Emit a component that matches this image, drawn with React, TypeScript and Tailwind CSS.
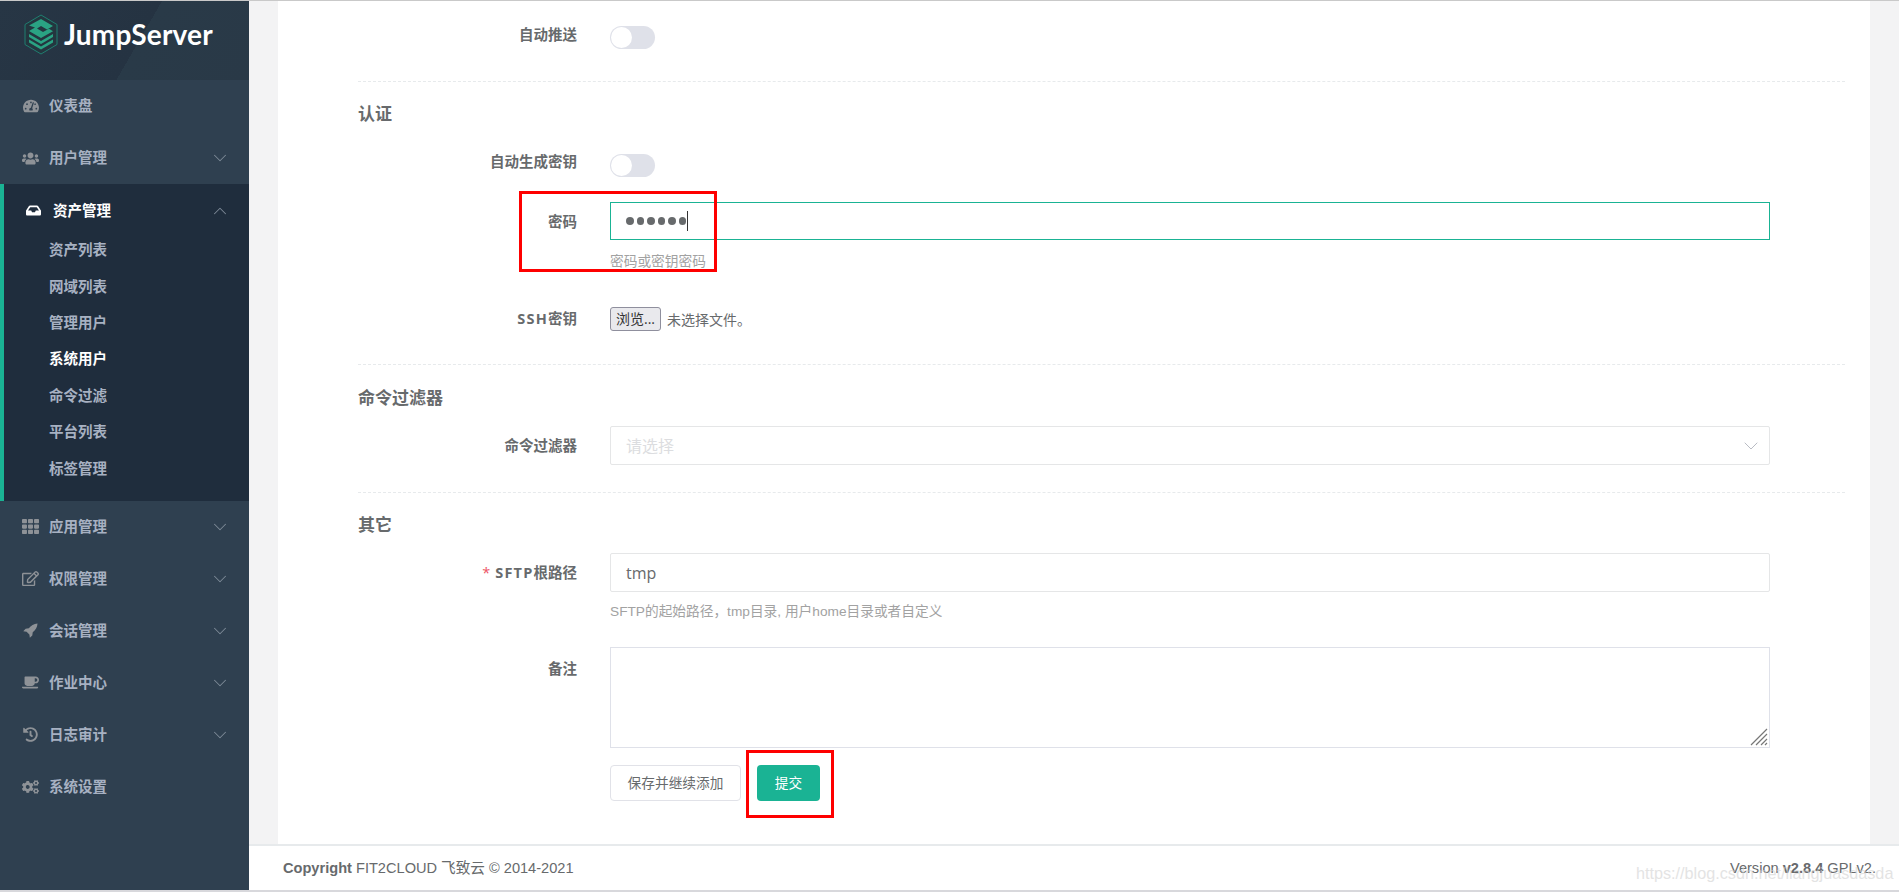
import React from 'react';
import { ChevronDown, ChevronUp } from 'lucide-react';
import { FaTachometerAlt, FaUsers, FaInbox, FaTh, FaRegEdit, FaCoffee, FaHistory, FaCogs } from 'react-icons/fa';

const navFont = "font-['Open_Sans','Noto_Sans_CJK_SC',sans-serif]";

function Logo() {
  return (
    <svg width="34" height="41" viewBox="0 0 34 41" className="shrink-0">
      <path d="M17 1 L33 10.5 V30.5 L17 40 L1 30.5 V10.5 Z" fill="#24363f" stroke="#1f7f70" strokeWidth="1" />
      <path d="M17 5 L29 12 L23 15.5 L17 12 L13 14.5 L19 18 L25 14.8 L29 17.2 L17 24 L5 17 L11 13.5 L5 11.5 Z" fill="#2aa383" />
      <path d="M5 20 L17 27 L29 20 V23 L17 30 L5 23 Z" fill="#2aa383" />
      <path d="M5 25.5 L17 32.5 L29 25.5 V28.5 L17 35.5 L5 28.5 Z" fill="#2aa383" />
    </svg>
  );
}

function Rocket() {
  return (
    <svg viewBox="0 0 16 16" width="15" height="15" fill="currentColor">
      <path d="M15.5 0.5 C11.5 0.8 8.5 2.6 6.2 5.6 L2.8 6.1 L0.3 8.7 L3.8 9.2 L6.8 12.2 L7.3 15.7 L9.9 13.2 L10.4 9.8 C13.4 7.5 15.2 4.5 15.5 0.5 Z" />
    </svg>
  );
}

function NavItem({ icon, label, arrow = false }: { icon: React.ReactNode; label: string; arrow?: boolean }) {
  return (
    <div className="flex h-[52px] items-center pl-[22px] pr-[18px] text-[#a7b1c2]">
      <span className="flex w-[17px] justify-center text-[#8e9297]">{icon}</span>
      <span className="ml-[10px] text-[14.5px] font-semibold">{label}</span>
      {arrow && <ChevronDown className="ml-auto h-[22px] w-[22px] text-[#7d8a98]" strokeWidth={1.1} />}
    </div>
  );
}

function SubItem({ label, active = false }: { label: string; active?: boolean }) {
  return (
    <div className={`flex h-[36.4px] items-center pl-[45px] text-[14.5px] font-semibold ${active ? 'text-white' : 'text-[#a7b1c2]'}`}>
      {label}
    </div>
  );
}

function Sidebar() {
  return (
    <aside className={`flex w-[249px] shrink-0 flex-col bg-[#2f4050] ${navFont}`}>
      <div className="flex h-[79px] items-center gap-[6px] bg-[linear-gradient(120deg,#273645_0%,#253342_55%,#293a48_55%,#293947_100%)] pb-[13px] pl-[24px]">
        <Logo />
        <span className="font-['Lato',sans-serif] text-[28px] font-bold tracking-[0.2px] text-white">JumpServer</span>
      </div>
      <NavItem icon={<FaTachometerAlt size={16} />} label="仪表盘" />
      <NavItem icon={<FaUsers size={19} />} label="用户管理" arrow />
      <div className="border-l-4 border-[#1ab394] bg-[#1f2d3d] pb-[14px]">
        <div className="flex h-[48px] items-center pl-[22px] pr-[18px] pt-[5px] text-white">
          <span className="flex w-[27px] justify-start"><FaInbox size={15} /></span>
          <span className="text-[14.5px] font-semibold">资产管理</span>
          <ChevronUp className="ml-auto h-[22px] w-[22px] text-[#7d8a98]" strokeWidth={1.1} />
        </div>
        <SubItem label="资产列表" />
        <SubItem label="网域列表" />
        <SubItem label="管理用户" />
        <SubItem label="系统用户" active />
        <SubItem label="命令过滤" />
        <SubItem label="平台列表" />
        <SubItem label="标签管理" />
      </div>
      <NavItem icon={<FaTh size={17} />} label="应用管理" arrow />
      <NavItem icon={<FaRegEdit size={17} />} label="权限管理" arrow />
      <NavItem icon={<Rocket />} label="会话管理" arrow />
      <NavItem icon={<FaCoffee size={17} />} label="作业中心" arrow />
      <NavItem icon={<FaHistory size={15} />} label="日志审计" arrow />
      <NavItem icon={<FaCogs size={18} />} label="系统设置" />
    </aside>
  );
}

function Toggle() {
  return (
    <div className="flex h-[23px] w-[45px] items-center rounded-full bg-[#dfe1e9] pl-[1px]">
      <div className="h-[21px] w-[21px] rounded-full bg-white" />
    </div>
  );
}

function Row({ label, latin, required = false, className = '', top = 0, children }: { label: string; latin?: string; required?: boolean; className?: string; top?: number; children: React.ReactNode }) {
  return (
    <div className={`flex pr-[75px] ${className}`}>
      <label className="w-[219px] shrink-0 text-right text-[14.5px] font-bold leading-[20px] text-[#676a6c]" style={{ paddingTop: top }}>
        {required && <span className="mr-[5px] font-normal text-[#ed5565]">*</span>}
        {latin && <span className="tracking-[1.2px]">{latin}</span>}
        {label}
      </label>
      <div className="ml-[33px] min-w-0 flex-1">{children}</div>
    </div>
  );
}

function Divider({ className = '' }: { className?: string }) {
  return <div className={`border-t border-dashed border-[#e7eaec] ${className}`} />;
}

function Heading({ children, className = '' }: { children: React.ReactNode; className?: string }) {
  return <h3 className={`text-[17px] font-bold leading-[24px] text-[#676a6c] ${className}`}>{children}</h3>;
}

function Form() {
  return (
    <div className="h-full bg-white pl-[80px] pr-[25px] pt-[25px]">
      <Row label="自动推送" className="[&>label]:-mt-[1px]"><Toggle /></Row>
      <Divider className="mt-[32px]" />
      <Heading className="mt-[20px]">认证</Heading>
      <Row label="自动生成密钥" className="mt-[28px] [&>label]:-mt-[2px]"><Toggle /></Row>

      <Row label="密码" className="mt-[25px]" top={10}>
        <div className="flex h-[38px] items-center border border-[#1ab394] pl-[15px] text-[#676a6c]">
          <span className="flex gap-[3px]">
            {[0, 1, 2, 3, 4, 5].map((i) => (
              <span key={i} className="h-[7.5px] w-[7.5px] rounded-full bg-[#676a6c]" />
            ))}
          </span>
          <span className="ml-[1px] h-[20px] w-px bg-[#333]" />
        </div>
        <p className="mt-[11px] text-[13.7px] leading-[20px] text-[#a2a2a2]">密码或密钥密码</p>
      </Row>

      <Row label="密钥" latin="SSH" className="mt-[38px]">
        <div className="-mt-[2px] flex items-center">
          <button className="h-[24px] w-[51px] rounded-[3px] border border-[#8f8f9d] bg-[#e9e9ed] text-[14px] leading-[20px] text-[#333]">浏览...</button>
          <span className="ml-[6px] text-[14px] text-[#676a6c]">未选择文件。</span>
        </div>
      </Row>

      <Divider className="mt-[33px]" />
      <Heading className="mt-[21px]">命令过滤器</Heading>
      <Row label="命令过滤器" className="mt-[16px]" top={10}>
        <div className="flex h-[39px] items-center justify-between rounded-[2px] border border-[#e5e6e7] pl-[15px] pr-[6px] text-[16px] text-[#dcdde0]">
          <span>请选择</span>
          <ChevronDown className="h-[24px] w-[24px] text-[#b9bcc4]" strokeWidth={1} />
        </div>
      </Row>
      <Divider className="mt-[27px]" />
      <Heading className="mt-[20px]">其它</Heading>
      <Row label="根路径" latin="SFTP" required className="mt-[16px]" top={10}>
        <div className="flex h-[39px] items-center rounded-[2px] border border-[#e5e6e7] pl-[15px] text-[16px] text-[#676a6c]">tmp</div>
        <p className="mt-[10px] font-['Liberation_Sans','Noto_Sans_CJK_SC',sans-serif] text-[13.7px] leading-[20px] text-[#a2a2a2]">SFTP的起始路径，tmp目录, 用户home目录或者自定义</p>
      </Row>
      <Row label="备注" className="mt-[25px]" top={12}>
        <div className="relative h-[101px] border border-[#dfe1e9]">
          <svg width="18" height="18" viewBox="0 0 18 18" className="absolute bottom-[1px] right-[1px]">
            <path d="M1 17 L17 1 M6 17 L17 6 M11 17 L17 11 M15 17 L17 15" stroke="#777" strokeWidth="1.2" />
          </svg>
        </div>
        <div className="mt-[17px] flex gap-[16px]">
          <button className="h-[36px] w-[131px] rounded-[4px] border border-[#e1e2e8] bg-white text-[13.7px] text-[#676a6c]">保存并继续添加</button>
          <button className="h-[36px] w-[63px] rounded-[4px] bg-[#1ab394] text-[13.7px] text-white">提交</button>
        </div>
      </Row>
    </div>
  );
}

export default function App() {
  return (
    <div className={`relative flex h-[892px] w-[1899px] flex-col overflow-hidden border-b-2 border-t border-b-[#d8d8dc] border-t-[#c9c9c9] bg-white ${navFont}`}>
      <div className="flex min-h-0 flex-1">
        <Sidebar />
        <main className="flex min-w-0 flex-1 flex-col">
          <div className="min-h-0 flex-1 bg-[#f3f3f4] pl-[29px] pr-[29px]">
            <Form />
          </div>
          <footer className="flex h-[46px] shrink-0 items-center justify-between border-t-2 border-[#e7eaec] bg-white pl-[34px] pr-[23px] pt-[2px] font-['Liberation_Sans','Noto_Sans_CJK_SC',sans-serif] text-[14.6px] text-[#676a6c]">
            <span><b>Copyright</b> FIT2CLOUD 飞致云 © 2014-2021</span>
            <span>Version <b>v2.8.4</b> GPLv2.</span>
          </footer>
        </main>
      </div>
      <div className="absolute left-[519px] top-[190px] h-[81px] w-[198px] border-[3px] border-[#fe0000]" />
      <div className="absolute left-[746px] top-[749px] h-[68px] w-[88px] border-[3px] border-[#fe0000]" />
      <span className="absolute left-[1636px] top-[862px] font-['Liberation_Sans',sans-serif] text-[16.2px] leading-[20px] text-[#d2d2d2] opacity-60">https://blog.csdn.net/liangjuasdasda</span>
    </div>
  );
}
